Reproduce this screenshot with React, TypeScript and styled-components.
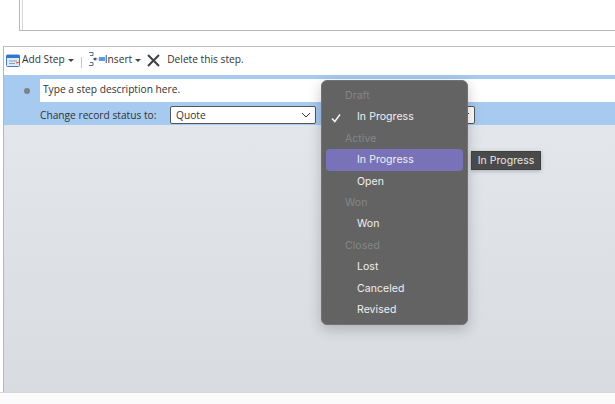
import React from 'react'
import styled, { createGlobalStyle } from 'styled-components'

const GlobalStyle = createGlobalStyle`
  html, body {
    margin: 0;
    padding: 0;
    background: #ffffff;
  }
  body {
    width: 615px;
    height: 404px;
    overflow: hidden;
    font-family: "Open Sans", "Liberation Sans", sans-serif;
  }
`

const Page = styled.div`
  position: relative;
  width: 615px;
  height: 404px;
  overflow: hidden;
  background: #ffffff;
`

const TopBox = styled.div`
  box-sizing: border-box;
  height: 31px;
  margin-left: 19px;
  border-left: 1px solid #b4b8bc;
  border-bottom: 1px solid #b4b8bc;
  padding-left: 2px;
`

const TopBoxInner = styled.div`
  height: 100%;
  border-left: 1px solid #d4d6d9;
`

const Panel = styled.div`
  box-sizing: border-box;
  display: flex;
  flex-direction: column;
  height: 346px;
  margin: 15px 0 0 3px;
  border-top: 1px solid #b9bdc2;
  border-left: 1px solid #b4b8bc;
`

const Toolbar = styled.div`
  box-sizing: border-box;
  display: flex;
  align-items: center;
  height: 28px;
  padding: 0 0 4px 2px;
  font-size: 10.2px;
  color: #333333;
  background: #ffffff;
`

const ToolButton = styled.span`
  display: flex;
  align-items: center;
  white-space: nowrap;
`

const Caret = styled.span`
  width: 0;
  height: 0;
  margin: 2px 0 0 3px;
  border-left: 3px solid transparent;
  border-right: 3px solid transparent;
  border-top: 3px solid #444444;
`

const Divider = styled.span`
  width: 1px;
  height: 11px;
  margin: 7px 6px 0 7px;
  background: #c3c6ca;
`

const StepRow = styled.div`
  display: flex;
  flex-direction: column;
  height: 50px;
  background: #a6caf0;
`

const DescRow = styled.div`
  display: flex;
  align-items: center;
  height: 23px;
  margin-top: 4px;
  font-size: 10.2px;
  color: #333333;
`

const Bullet = styled.span`
  width: 6px;
  height: 6px;
  margin: 0 10px 0 20px;
  border-radius: 50%;
  background: #7d8288;
`

const DescInput = styled.div`
  box-sizing: border-box;
  flex: 1;
  display: flex;
  align-items: center;
  height: 23px;
  padding: 0 0 3px 3px;
  background: #ffffff;
  white-space: nowrap;
`

const StatusRow = styled.div`
  display: flex;
  align-items: center;
  height: 18px;
  margin-top: 4px;
  padding-left: 36px;
  font-size: 10.2px;
  color: #333333;
`

const StatusLabel = styled.span`
  width: 130px;
  white-space: nowrap;
`

const FakeSelect = styled.div<{ $width: number }>`
  box-sizing: border-box;
  display: flex;
  align-items: center;
  justify-content: space-between;
  width: ${(p) => p.$width}px;
  height: 18px;
  margin-right: 25px;
  padding: 0 4px 0 5px;
  background: #ffffff;
  border: 1px solid #555555;
  border-radius: 2px;
`

const Body = styled.div`
  flex: 1;
  background: linear-gradient(#e3e7ec, #d8dce1);
`

const Footer = styled.div`
  height: 12px;
  border-top: 1px solid #d5d7da;
  background: #fbfbfb;
`

const Menu = styled.div`
  position: absolute;
  left: 321px;
  top: 80px;
  box-sizing: border-box;
  width: 147px;
  height: 245px;
  padding: 4px;
  border: 1px solid #727272;
  border-radius: 6px;
  background: #636364;
  box-shadow: 0 4px 14px rgba(0, 0, 0, 0.22);
  font-family: Inter, "Liberation Sans", sans-serif;
  font-size: 10.5px;
  letter-spacing: 0.05px;
`

const MenuHeading = styled.div`
  height: 21.4px;
  line-height: 21px;
  padding-left: 19px;
  color: #858687;
`

const MenuItem = styled.div<{ $active?: boolean }>`
  position: relative;
  height: 21.4px;
  line-height: 21px;
  padding-left: 31px;
  border-radius: 4px;
  color: #f0f0f0;
  background: ${(p) => (p.$active ? '#7a72b8' : 'transparent')};
`

const Check = styled.svg`
  position: absolute;
  left: 4px;
  top: 6px;
  width: 12px;
  height: 12px;
`

const Tooltip = styled.div`
  position: absolute;
  left: 471px;
  top: 151px;
  box-sizing: border-box;
  width: 70px;
  height: 19px;
  border: 1px solid #3f3f3f;
  background: #4a4a4a;
  box-shadow: 0 1px 4px rgba(0, 0, 0, 0.25);
  color: #e8e8e8;
  font-family: Inter, "Liberation Sans", sans-serif;
  font-size: 10.5px;
  letter-spacing: 0.05px;
  line-height: 17px;
  text-align: center;
`

const Chevron = () => (
  <svg width="10" height="6" viewBox="0 0 10 6" fill="none" stroke="#333" strokeWidth="1">
    <path d="M1 1l4 4 4-4" />
  </svg>
)

const AddStepIcon = () => (
  <svg width="15" height="14" viewBox="0 0 15 14" style={{ marginRight: 1, marginTop: 4 }}>
    <rect x="0.5" y="1" width="13" height="11.5" rx="1" fill="#dfe9f5" stroke="#4a7fc0" />
    <rect x="0.5" y="1" width="13" height="3" fill="#2f78cf" />
    <path d="M3 7h8M3 9.5h6" stroke="#8ea0b5" />
    <path d="M10 9l4-1" stroke="#d2552a" strokeWidth="1.2" />
  </svg>
)

const InsertIcon = () => (
  <svg width="17" height="16" viewBox="0 0 17 16">
    <path d="M1 1.5h4v3H2M1 14.5h4v-3H2" fill="none" stroke="#5f6f80" />
    <path d="M5 8h3" stroke="#5f6f80" />
    <rect x="6" y="6.8" width="2.5" height="2.5" fill="#44576b" />
    <rect x="11" y="6" width="6" height="4" fill="#5b9bdc" />
    <path d="M8.5 8H11" stroke="#9abbe0" />
  </svg>
)

const DeleteIcon = () => (
  <svg width="13" height="13" viewBox="0 0 13 13" style={{ margin: '2px 7px 0 6px' }}>
    <path d="M1 1l11 11M12 1L1 12" stroke="#3f4246" strokeWidth="2" />
  </svg>
)

const App = () => (
  <Page>
    <GlobalStyle />
    <TopBox>
      <TopBoxInner />
    </TopBox>
    <Panel>
      <Toolbar>
        <ToolButton>
          <AddStepIcon />
          Add Step
          <Caret />
        </ToolButton>
        <Divider />
        <ToolButton>
          <InsertIcon />
          Insert
          <Caret />
        </ToolButton>
        <DeleteIcon />
        <ToolButton>Delete this step.</ToolButton>
      </Toolbar>
      <StepRow>
        <DescRow>
          <Bullet />
          <DescInput>Type a step description here.</DescInput>
        </DescRow>
        <StatusRow>
          <StatusLabel>Change record status to:</StatusLabel>
          <FakeSelect $width={146}>
            Quote
            <Chevron />
          </FakeSelect>
          <FakeSelect $width={134}>
            <span />
            <Chevron />
          </FakeSelect>
        </StatusRow>
      </StepRow>
      <Body />
    </Panel>
    <Footer />
    <Menu>
      <MenuHeading>Draft</MenuHeading>
      <MenuItem>
        <Check viewBox="0 0 12 12" fill="none" stroke="#f4f4f4" strokeWidth="1.5">
          <path d="M2 6.5l2.8 3L10 2.5" />
        </Check>
        In Progress
      </MenuItem>
      <MenuHeading>Active</MenuHeading>
      <MenuItem $active>In Progress</MenuItem>
      <MenuItem>Open</MenuItem>
      <MenuHeading>Won</MenuHeading>
      <MenuItem>Won</MenuItem>
      <MenuHeading>Closed</MenuHeading>
      <MenuItem>Lost</MenuItem>
      <MenuItem>Canceled</MenuItem>
      <MenuItem>Revised</MenuItem>
    </Menu>
    <Tooltip>In Progress</Tooltip>
  </Page>
)

export default App
